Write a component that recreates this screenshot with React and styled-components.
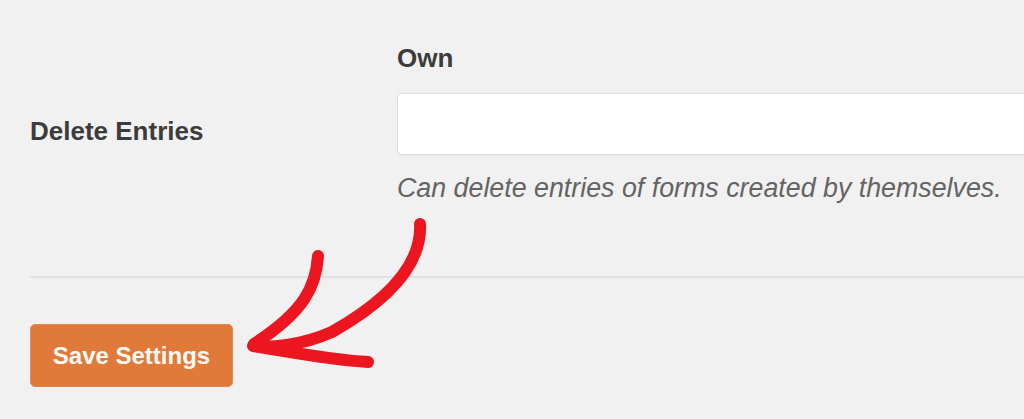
import React from "react";
import styled, { createGlobalStyle } from "styled-components";

const GlobalStyle = createGlobalStyle`
  html, body {
    margin: 0;
    padding: 0;
    background: #f1f1f1;
    overflow: hidden;
  }
  body {
    font-family: "Liberation Sans", Arial, sans-serif;
  }
`;

const App = () => {
  return (
    <Page>
      <GlobalStyle />
      <FormRow>
        <RowLabel>Delete Entries</RowLabel>
        <Field>
          <FieldLabel>Own</FieldLabel>
          <InputClip>
            <Input type="text" />
          </InputClip>
          <Hint>Can delete entries of forms created by themselves.</Hint>
        </Field>
      </FormRow>
      <Divider />
      <SaveButton>Save Settings</SaveButton>
      <Annotation viewBox="0 0 1024 419" width="1024" height="419">
        <path d="M318 256 C 316 286, 305 311, 254 344" />
        <path d="M420 224 C 422 262, 392 298, 332 332 C 300 346, 270 348, 253 346 C 290 352, 330 360, 368 362" />
      </Annotation>
    </Page>
  );
};
export default App;

const Page = styled.div`
  position: relative;
  width: 1024px;
  height: 419px;
  box-sizing: border-box;
  padding: 43px 0 0 30px;
  overflow: hidden;
`;
const FormRow = styled.div`
  display: grid;
  grid-template-columns: 367px 1fr;
`;
const RowLabel = styled.div`
  padding-top: 73px;
  font-size: 26px;
  line-height: 30px;
  font-weight: 700;
  color: #3c3c3c;
`;
const Field = styled.div`
  display: flex;
  flex-direction: column;
  min-width: 0;
`;
const FieldLabel = styled.div`
  font-size: 26px;
  line-height: 30px;
  font-weight: 700;
  color: #3c3c3c;
  margin-bottom: 20px;
`;
const InputClip = styled.div`
  overflow: hidden;
  padding-bottom: 2px;
  margin-bottom: -2px;
`;
const Input = styled.input`
  display: block;
  width: calc(100% + 20px);
  height: 62px;
  box-sizing: border-box;
  background: #ffffff;
  border: 1px solid #dcdcdc;
  border-radius: 5px;
  box-shadow: 0 1px 2px rgba(0, 0, 0, 0.05);
  outline: none;
`;
const Hint = styled.p`
  margin: 18px 0 0 0;
  font-size: 26.8px;
  line-height: 30px;
  font-style: italic;
  color: #646464;
  white-space: nowrap;
`;
const Divider = styled.hr`
  margin: 73px 0 0 0;
  border: 0;
  border-top: 2px solid #e1e1e1;
`;
const SaveButton = styled.button`
  display: block;
  margin-top: 46px;
  width: 203px;
  height: 63px;
  background-color: #e07a3a;
  border: 1px solid #e3874b;
  border-radius: 5px;
  color: #fffaf5;
  font-family: "Liberation Sans", Arial, sans-serif;
  font-size: 24px;
  font-weight: 700;
  cursor: pointer;
`;
const Annotation = styled.svg`
  position: absolute;
  left: 0;
  top: 0;
  pointer-events: none;
  fill: none;
  stroke: #ec1620;
  stroke-width: 12;
  stroke-linecap: round;
  stroke-linejoin: round;
`;
